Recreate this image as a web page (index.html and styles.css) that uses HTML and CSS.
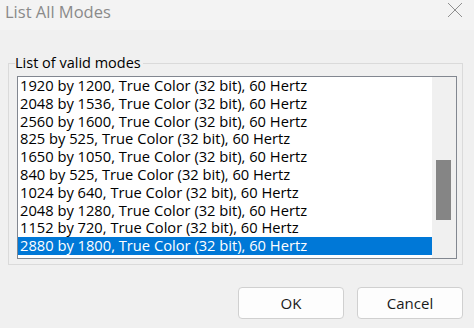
FILE: index.html
```html
<!DOCTYPE html>
<html>
	<head>
		<meta charset="UTF-8">
		<title>List All Modes</title>
		<link rel="stylesheet" href="styles.css">
	</head>
	<body>
		<div class="dialog">
			<div class="titlebar">
				<span class="title">List All Modes</span>
				<svg class="close" width="16" height="16" viewBox="0 0 16 16">
					<path d="M1 1L15 15M15 1L1 15" stroke="#8f8f8f" stroke-width="1" fill="none"/>
				</svg>
			</div>
			<div class="body">
				<fieldset class="group">
					<legend>List of valid modes</legend>
					<div class="listbox">
						<ul class="items">
							<li>1920 by 1200, True Color (32 bit), 60 Hertz</li>
							<li>2048 by 1536, True Color (32 bit), 60 Hertz</li>
							<li>2560 by 1600, True Color (32 bit), 60 Hertz</li>
							<li>825 by 525, True Color (32 bit), 60 Hertz</li>
							<li>1650 by 1050, True Color (32 bit), 60 Hertz</li>
							<li>840 by 525, True Color (32 bit), 60 Hertz</li>
							<li>1024 by 640, True Color (32 bit), 60 Hertz</li>
							<li>2048 by 1280, True Color (32 bit), 60 Hertz</li>
							<li>1152 by 720, True Color (32 bit), 60 Hertz</li>
							<li class="selected">2880 by 1800, True Color (32 bit), 60 Hertz</li>
						</ul>
						<div class="scrollbar">
							<div class="thumb"></div>
						</div>
					</div>
				</fieldset>
				<div class="buttons">
					<button class="btn">OK</button>
					<button class="btn">Cancel</button>
				</div>
			</div>
		</div>
	</body>
</html>
```

FILE: styles.css
```css
html, body{
	margin: 0;
	padding: 0;
	background: #f0f0f0;
	font-family: "Open Sans", "Noto Sans", sans-serif;
	color: #000;
}
.dialog{
	width: 474px;
	height: 328px;
	display: flex;
	flex-direction: column;
}
.titlebar{
	height: 30px;
	display: flex;
	align-items: flex-start;
	justify-content: space-between;
	background: #f3f3f3;
}
.title{
	padding: 0 0 0 5px;
	font-size: 16.5px;
	line-height: 24px;
	color: #8a8a8a;
}
.close{
	margin: 2px 11px 0 0;
}
.body{
	flex: 1;
	display: flex;
	flex-direction: column;
	padding: 25px 11px 0 8px;
}
.group{
	margin: 0;
	padding: 0 5px 5px 8px;
	border: 1px solid #dadada;
	height: 210px;
	box-sizing: border-box;
	min-width: 0;
}
.group legend{
	margin-left: -2px;
	padding: 0 2px 0 0;
	font-size: 14.5px;
	line-height: 16px;
}
.listbox{
	margin-top: 5px;
	height: 183px;
	box-sizing: border-box;
	border: 1px solid #828790;
	background: #fff;
	display: flex;
}
.items{
	flex: 1;
	margin: 0;
	padding: 0;
	list-style: none;
}
.items li{
	height: 17.8px;
	line-height: 17.8px;
	padding-left: 2px;
	font-size: 14.7px;
	white-space: nowrap;
}
.items li.selected{
	background: #0078d7;
	color: #fff;
}
.scrollbar{
	width: 24px;
	background: #f0f0f0;
}
.thumb{
	width: 15px;
	height: 60px;
	margin: 83px 0 0 4px;
	background: #858585;
}
.buttons{
	display: flex;
	justify-content: flex-end;
	gap: 13px;
	margin-top: 22px;
}
.btn{
	width: 106px;
	height: 32px;
	background: #fdfdfd;
	border: 1px solid #d0d0d0;
	border-radius: 4px;
	font-family: "Open Sans", "Noto Sans", sans-serif;
	font-size: 15px;
	color: #1a1a1a;
}
```
